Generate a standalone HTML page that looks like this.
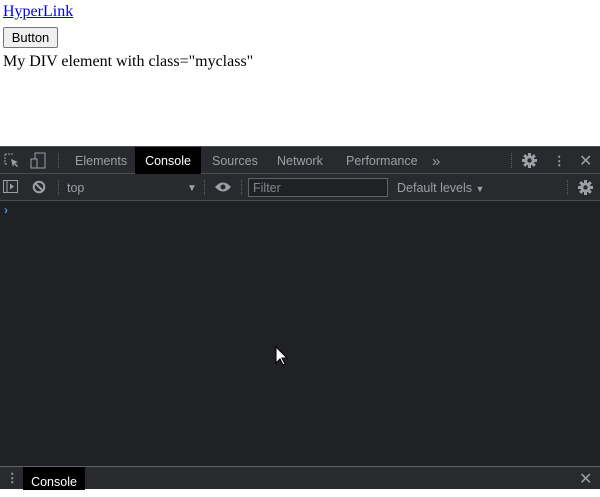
<!DOCTYPE html>
<html><head><style>
*{margin:0;padding:0;box-sizing:border-box}
body{width:600px;height:489px;overflow:hidden;background:#fff;position:relative;font-family:"Liberation Serif",serif;font-size:16px}
.ui{font-family:"Liberation Sans",sans-serif}
.dt{position:absolute;left:0;top:146px;width:600px;height:343px;background:#202124;font-family:"Liberation Sans",sans-serif;font-size:12.5px;color:#9aa0a6}
.bar{position:absolute;left:0;width:600px;background:#292a2d;border-bottom:1px solid #494c50}
.t{position:absolute;top:0;height:27px;line-height:29px}
.sep{position:absolute;width:0;border-left:1px dotted #5f6368}
svg{position:absolute}
</style></head><body>
<div style="position:absolute;left:3px;top:3px;"><a href="#" style="color:#0000ee;text-decoration:underline">HyperLink</a></div>
<button class="ui" style="position:absolute;left:3px;top:27px;width:55px;height:21px;font-size:13px;background:#efefef;border:1px solid #767676;border-radius:2px;color:#000">Button</button>
<div style="position:absolute;left:3px;top:53px">My DIV element with class="myclass"</div>

<div class="dt">
 <div class="bar" style="top:0;height:28px;border-top:1px solid #494c50">
  <svg style="left:4px;top:6px" width="16" height="16"><path d="M1 1h9M1 1v10M1 11h3" stroke="#9aa0a6" fill="none" stroke-dasharray="2 1"/><path d="M7 6l7 3-3 1 3 3-1 1-3-3-1 3z" fill="#9aa0a6"/></svg>
  <svg style="left:30px;top:5px" width="16" height="18"><rect x="5" y="1" width="10" height="15" fill="none" stroke="#9aa0a6"/><rect x="1" y="7" width="6" height="9" fill="#292a2d" stroke="#9aa0a6"/></svg>
  <div class="sep" style="left:58px;top:6px;height:15px"></div>
  <div class="t" style="left:75px">Elements</div>
  <div class="t" style="left:135px;width:66px;background:#000;color:#fff;text-align:center">Console</div>
  <div class="t" style="left:212px">Sources</div>
  <div class="t" style="left:277px">Network</div>
  <div class="t" style="left:346px">Performance</div>
  <div class="t" style="left:432px;font-size:15px">»</div>
  <div class="sep" style="left:511px;top:6px;height:15px"></div>
  <svg style="left:522px;top:6px" width="15" height="15"><g fill="#9aa0a6"><circle cx="7.5" cy="7.5" r="5"/><rect x="6" y="0" width="3" height="15"/><rect x="0" y="6" width="15" height="3"/><rect x="6" y="0" width="3" height="15" transform="rotate(45 7.5 7.5)"/><rect x="6" y="0" width="3" height="15" transform="rotate(-45 7.5 7.5)"/></g><circle cx="7.5" cy="7.5" r="2.2" fill="#292a2d"/></svg>
  <div class="t" style="left:553px;font-weight:bold">⋮</div>
  <div class="t" style="left:579px;font-size:16px">✕</div>
 </div>
 <div class="bar" style="top:28px;height:27px">
  <svg style="left:3px;top:6px" width="16" height="14"><rect x="0.5" y="0.5" width="14" height="12" fill="none" stroke="#9aa0a6"/><path d="M4 1v11" stroke="#9aa0a6"/><path d="M7 3.5l4 3-4 3z" fill="#9aa0a6"/></svg>
  <svg style="left:32px;top:6px" width="14" height="14"><circle cx="7" cy="7" r="5.3" fill="none" stroke="#9aa0a6" stroke-width="2"/><path d="M3.5 3.5l7 7" stroke="#9aa0a6" stroke-width="2"/></svg>
  <div class="sep" style="left:58px;top:6px;height:15px"></div>
  <div class="t" style="left:67px">top</div>
  <div class="t" style="left:187px;font-size:10px">▼</div>
  <div class="sep" style="left:204px;top:6px;height:15px"></div>
  <svg style="left:214px;top:7px" width="18" height="12"><path d="M1 6Q9 -3 17 6Q9 15 1 6z" fill="#9aa0a6"/><circle cx="9" cy="6" r="2.5" fill="#292a2d"/></svg>
  <div class="sep" style="left:241px;top:6px;height:15px"></div>
  <div style="position:absolute;left:248px;top:4px;width:140px;height:19px;border:1px solid #5f6368;background:#202124;color:#80868b;line-height:19px;padding-left:4px">Filter</div>
  <div class="t" style="left:397px">Default levels <span style="font-size:9px">▼</span></div>
  <div class="sep" style="left:567px;top:6px;height:15px"></div>
  <svg style="left:578px;top:6px" width="15" height="15"><g fill="#9aa0a6"><circle cx="7.5" cy="7.5" r="5"/><rect x="6" y="0" width="3" height="15"/><rect x="0" y="6" width="15" height="3"/><rect x="6" y="0" width="3" height="15" transform="rotate(45 7.5 7.5)"/><rect x="6" y="0" width="3" height="15" transform="rotate(-45 7.5 7.5)"/></g><circle cx="7.5" cy="7.5" r="2.2" fill="#292a2d"/></svg>
 </div>
 <div style="position:absolute;left:4px;top:57px;color:#4c8df6;font-size:12px;font-weight:bold">›</div>
 <svg style="left:275px;top:200px" width="14" height="22"><path d="M1 1v16l4-4 3 6 2-1-3-6h5z" fill="#fff" stroke="#000"/></svg>
 <div class="bar" style="top:320px;height:23px;border-top:1px solid #5f6368;border-bottom:none">
  <div class="t" style="left:6px;top:-3px;font-weight:bold">⋮</div>
  <div style="position:absolute;left:23px;top:0;width:62px;height:23px;background:#000;color:#fff;line-height:30px;text-align:center">Console</div>
  <div class="t" style="left:579px;top:-2px;font-size:16px">✕</div>
 </div>
</div>
</body></html>
